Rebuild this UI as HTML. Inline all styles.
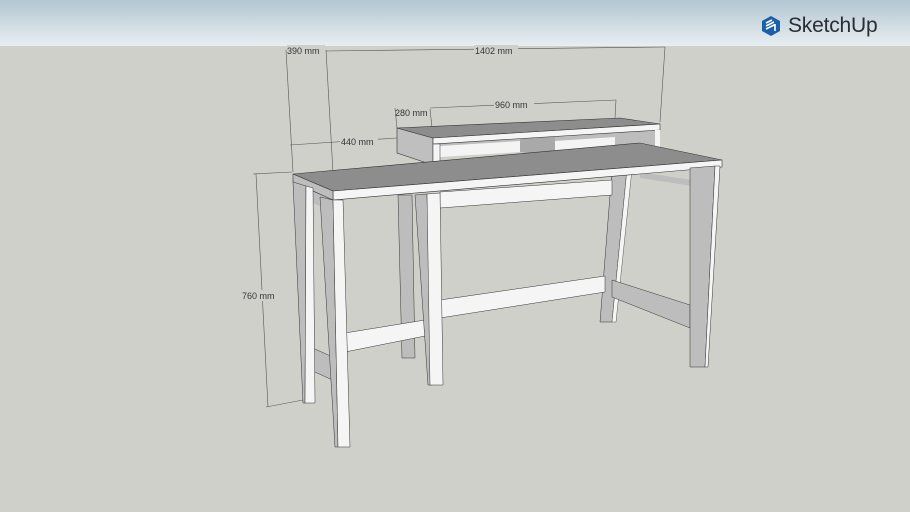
<!DOCTYPE html>
<html><head><style>
html,body{margin:0;padding:0}
body{width:910px;height:512px;overflow:hidden;background:#d0d0cb;position:relative;font-family:"Liberation Sans",sans-serif}
.bar{position:absolute;left:0;top:0;width:910px;height:46px;background:linear-gradient(#b3c6d1,#e8eef1)}
.logo{position:absolute;left:760px;top:14px;display:flex;align-items:center}
.logo span{font-size:21px;color:#2a2d33;margin-left:6px;letter-spacing:-0.2px}
svg.m{position:absolute;left:0;top:0}
text{font-family:"Liberation Sans",sans-serif;font-size:9px;fill:#333}
</style></head><body>
<div class="bar"></div>
<div class="logo">
<svg width="22" height="22" viewBox="0 0 22 22"><path d="M11 1 L20 6 L20 16 L11 21 L2 16 L2 6 Z" fill="#1b5fa8"/><path d="M6 8 L12 5 M6 11 L14 7 M6 14 L15 9.5 M15 9 L15 16" stroke="#fff" stroke-width="1.6" fill="none"/></svg>
<span>SketchUp</span></div>
<svg class="m" width="910" height="512">
<g stroke="#555" stroke-width="0.6" fill="none">
<line x1="286" y1="50" x2="293" y2="172"/><line x1="326" y1="50" x2="334" y2="190"/>
<line x1="326" y1="51" x2="665" y2="47"/><line x1="665" y1="47" x2="660" y2="122"/>
<line x1="290" y1="145" x2="397" y2="138"/>
<line x1="395" y1="108" x2="397" y2="128"/><line x1="430" y1="109" x2="433" y2="137"/>
<line x1="430" y1="108" x2="616" y2="100"/><line x1="616" y1="100" x2="615" y2="118"/>
<line x1="253" y1="174" x2="292" y2="172"/><line x1="256" y1="174" x2="268" y2="407"/><line x1="266" y1="407" x2="303" y2="400"/>
</g>
<!-- hutch -->
<polygon points="397,128 397,153 433,165 433,138" fill="#bfbfbf" stroke="#333" stroke-width=".6"/>
<polygon points="433,138 660,124 660,146 433,153" fill="#bdbdbd"/>
<polygon points="440,146 520,141 520,152 440,157" fill="#f4f4f4"/>
<polygon points="555,141 615,137 615,146 555,150" fill="#f4f4f4"/>
<polygon points="520,137 555,135 555,157 520,152" fill="#a9a9a9"/>
<polygon points="397,128 620,118 660,124 433,138" fill="#8d8d8d" stroke="#333" stroke-width=".6"/>
<polygon points="433,138 660,124 660,130 433,144" fill="#f5f5f5" stroke="#333" stroke-width=".6"/>
<polygon points="433,144 440,144 440,165 433,165" fill="#f5f5f5" stroke="#333" stroke-width=".5"/>
<polygon points="655,130 660,130 660,150 655,150" fill="#f5f5f5"/>
<!-- back legs -->
<polygon points="398,195 412,195 415,358 402,358" fill="#bdbdbd" stroke="#333" stroke-width=".5"/>
<polygon points="612,170 627,169 612,322 600,322" fill="#bdbdbd" stroke="#333" stroke-width=".5"/>
<polygon points="627,169 632,169 616,322 612,322" fill="#f5f5f5" stroke="#333" stroke-width=".4"/>
<polygon points="612,280 690,305 690,328 612,297" fill="#bdbdbd" stroke="#333" stroke-width=".5"/>
<polygon points="640,172 692,180 692,186 640,178" fill="#bdbdbd"/>
<!-- front stretcher -->
<polygon points="440,300 605,276 605,292 440,318" fill="#f5f5f5" stroke="#333" stroke-width=".5"/>
<polygon points="345,333 425,320 425,336 345,352" fill="#f5f5f5" stroke="#333" stroke-width=".5"/>
<polygon points="306,345 335,358 337,382 306,368" fill="#bdbdbd" stroke="#333" stroke-width=".5"/>
<!-- apron -->
<polygon points="440,192 612,180 612,195 440,208" fill="#f5f5f5" stroke="#333" stroke-width=".5"/>
<polygon points="306,184 333,196 333,212 306,200" fill="#bdbdbd"/>
<!-- top -->
<polygon points="293,174 640,143 722,160 333,191" fill="#8d8d8d" stroke="#333" stroke-width=".6"/>
<polygon points="333,191 722,160 722,167 333,200" fill="#f5f5f5" stroke="#333" stroke-width=".6"/>
<polygon points="293,174 333,191 333,200 293,182" fill="#bdbdbd" stroke="#333" stroke-width=".6"/>
<!-- front legs -->
<polygon points="293,182 306,186 303,403 303,403" fill="#bdbdbd"/>
<polygon points="293,182 306,186 305,403 303,403 " fill="#bdbdbd" stroke="#333" stroke-width=".5"/>
<polygon points="306,186 313,188 315,403 305,403" fill="#f5f5f5" stroke="#333" stroke-width=".5"/>
<polygon points="320,197 333,200 338,447 335,447" fill="#bdbdbd" stroke="#333" stroke-width=".5"/>
<polygon points="333,200 343,200 350,447 338,447" fill="#f5f5f5" stroke="#333" stroke-width=".5"/>
<polygon points="415,195 427,194 432,385 428,385" fill="#bdbdbd" stroke="#333" stroke-width=".5"/>
<polygon points="427,194 440,193 443,385 430,385" fill="#f5f5f5" stroke="#333" stroke-width=".5"/>
<polygon points="690,168 715,166 705,367 690,367" fill="#bdbdbd" stroke="#333" stroke-width=".5"/>
<polygon points="715,166 720,166 708,367 705,367" fill="#f5f5f5" stroke="#333" stroke-width=".5"/>
<g>
<rect x="287" y="45" width="38" height="11" fill="#d0d0cb"/><text x="287" y="54">390 mm</text>
<rect x="474" y="45" width="44" height="11" fill="#d0d0cb"/><text x="475" y="54">1402 mm</text>
<rect x="494" y="99" width="40" height="11" fill="#d0d0cb"/><text x="495" y="108">960 mm</text>
<text x="395" y="116">280 mm</text>
<rect x="340" y="136" width="38" height="11" fill="#d0d0cb"/><text x="341" y="145">440 mm</text>
<rect x="241" y="290" width="38" height="11" fill="#d0d0cb"/><text x="242" y="299">760 mm</text>
</g>
</svg>
</body></html>
